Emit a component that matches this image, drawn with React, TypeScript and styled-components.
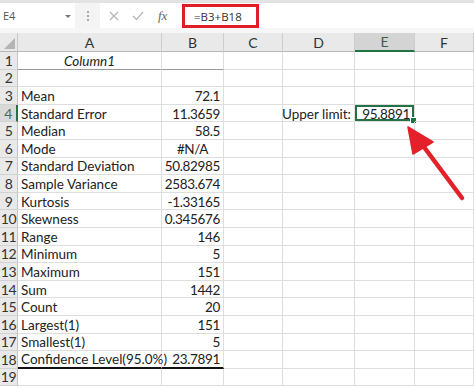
import React from 'react';
import styled, { createGlobalStyle, css } from 'styled-components';

const GlobalStyle = createGlobalStyle`
  html, body {
    margin: 0;
    padding: 0;
    background: #ffffff;
    overflow: hidden;
  }
  body {
    font-family: Lato, "Open Sans", sans-serif;
  }
`;

const Page = styled.div`
  position: relative;
  width: 474px;
  height: 389px;
  overflow: hidden;
  background: #fff;
`;

const TopStrip = styled.div`
  height: 3px;
  background: #e3e3e3;
`;

const FormulaBar = styled.div`
  height: 25px;
  display: flex;
  align-items: stretch;
  background: #f4f4f4;
`;

const NameBox = styled.div`
  width: 75px;
  background: #fff;
  display: flex;
  align-items: center;
  justify-content: space-between;
  padding: 0 4px 0 3px;
  box-sizing: border-box;
  font-family: "Open Sans", Lato, sans-serif;
  font-size: 11px;
  color: #555;
`;

const Caret = styled.span`
  width: 0;
  height: 0;
  border-left: 3px solid transparent;
  border-right: 3px solid transparent;
  border-top: 3px solid #777;
  margin-top: 1px;
`;

const Grip = styled.div`
  width: 25px;
  display: flex;
  flex-direction: column;
  align-items: center;
  justify-content: center;
  gap: 2px;
`;

const Dot = styled.span`
  width: 2px;
  height: 2px;
  background: #a8a8a8;
`;

const FxBox = styled.div`
  width: 82px;
  background: #fff;
  display: flex;
  align-items: center;
  gap: 13px;
  padding-left: 9px;
  box-sizing: border-box;
`;

const FxLabel = styled.span`
  font-family: "Liberation Serif", serif;
  font-style: italic;
  font-size: 13px;
  color: #666;
  margin-left: 1px;
`;

const FormulaInput = styled.div`
  flex: 1;
  background: #fff;
  display: flex;
  align-items: center;
`;

const Highlight = styled.div`
  width: 77px;
  height: 24px;
  margin-top: 1px;
  border: 3px solid #df1f26;
  box-sizing: border-box;
  display: flex;
  align-items: center;
  padding-left: 9px;
  font-family: "Open Sans", Lato, sans-serif;
  font-size: 11.5px;
  color: #333;
`;

const Gap = styled.div`
  height: 5px;
  background: #f6f6f6;
`;

const Sheet = styled.div`
  display: grid;
  grid-template-columns: 18px 144px 62px 59px 72px 60px 1fr;
  grid-template-rows: 19px;
  grid-auto-rows: 17.6px;
  font-size: 13.5px;
  color: #222;
`;

const Corner = styled.div`
  position: relative;
  background: #e9e9e9;
  border-right: 1px solid #c9c9c9;
  border-bottom: 1px solid #b8b8b8;
  &::after {
    content: '';
    position: absolute;
    right: 2px;
    bottom: 2px;
    width: 0;
    height: 0;
    border-left: 11px solid transparent;
    border-bottom: 11px solid #b4b4b4;
  }
`;

const ColHead = styled.div<{ $active?: boolean }>`
  background: ${p => (p.$active ? '#d4d4d4' : '#e9e9e9')};
  border-right: 1px solid #cdcdcd;
  border-bottom: ${p => (p.$active ? '2px solid #217346' : '1px solid #b8b8b8')};
  display: flex;
  align-items: center;
  justify-content: center;
  color: ${p => (p.$active ? '#3d5e48' : '#333')};
  font-size: 14px;
`;

const RowHead = styled.div<{ $active?: boolean }>`
  background: ${p => (p.$active ? '#d9d9d9' : '#e9e9e9')};
  border-right: ${p => (p.$active ? '2px solid #217346' : '1px solid #c4c4c4')};
  border-bottom: 1px solid #d2d2d2;
  display: flex;
  align-items: center;
  justify-content: center;
  color: ${p => (p.$active ? '#4f6b58' : '#333')};
  font-size: 14px;
  letter-spacing: -0.4px;
`;

type Align = 'left' | 'right' | 'center';

const Cell = styled.div<{
  $align?: Align;
  $italic?: boolean;
  $numeric?: boolean;
  $rule?: 'thin' | 'thick';
  $selected?: boolean;
}>`
  position: relative;
  border-right: 1px solid #dedede;
  border-bottom: 1px solid #dedede;
  display: flex;
  align-items: center;
  padding: 1px 3px 0;
  white-space: nowrap;
  overflow: visible;
  justify-content: ${p =>
    p.$align === 'right' ? 'flex-end' : p.$align === 'center' ? 'center' : 'flex-start'};
  font-style: ${p => (p.$italic ? 'italic' : 'normal')};
  letter-spacing: ${p => (p.$numeric ? '-0.35px' : 'normal')};
  ${p => p.$rule === 'thin' && css`border-bottom-color: #9a9a9a;`}
  ${p => p.$rule === 'thick' && css`border-bottom: 2px solid #111;`}
  ${p =>
    p.$selected &&
    css`
      padding-right: 4px;
      box-shadow: inset 0 0 0 2px #217346;
      &::after {
        content: '';
        position: absolute;
        right: -3px;
        bottom: -3px;
        width: 5px;
        height: 5px;
        background: #217346;
        border: 1px solid #fff;
      }
    `}
`;

const Arrow = styled.svg`
  position: absolute;
  left: 0;
  top: 0;
  pointer-events: none;
`;

const columns = ['A', 'B', 'C', 'D', 'E', 'F'];

type Row = { label?: string; value?: string; align?: Align };

const stats: Row[] = [
  {},
  {},
  { label: 'Mean', value: '72.1' },
  { label: 'Standard Error', value: '11.3659' },
  { label: 'Median', value: '58.5' },
  { label: 'Mode', value: '#N/A', align: 'center' },
  { label: 'Standard Deviation', value: '50.82985' },
  { label: 'Sample Variance', value: '2583.674' },
  { label: 'Kurtosis', value: '-1.33165' },
  { label: 'Skewness', value: '0.345676' },
  { label: 'Range', value: '146' },
  { label: 'Minimum', value: '5' },
  { label: 'Maximum', value: '151' },
  { label: 'Sum', value: '1442' },
  { label: 'Count', value: '20' },
  { label: 'Largest(1)', value: '151' },
  { label: 'Smallest(1)', value: '5' },
  { label: 'Confidence Level(95.0%)', value: '23.7891' },
  {},
];

export default function App() {
  return (
    <Page>
      <GlobalStyle />
      <TopStrip />
      <FormulaBar>
        <NameBox>
          E4
          <Caret />
        </NameBox>
        <Grip>
          <Dot />
          <Dot />
          <Dot />
        </Grip>
        <FxBox>
          <svg width="10" height="10" viewBox="0 0 10 10">
            <path d="M1 1 L9 9 M9 1 L1 9" stroke="#b5b5b5" strokeWidth="1.2" fill="none" />
          </svg>
          <svg width="12" height="10" viewBox="0 0 12 10">
            <path d="M1 5 L4.5 8.5 L11 1" stroke="#b5b5b5" strokeWidth="1.2" fill="none" />
          </svg>
          <FxLabel>fx</FxLabel>
        </FxBox>
        <FormulaInput>
          <Highlight>=B3+B18</Highlight>
        </FormulaInput>
      </FormulaBar>
      <Gap />
      <Sheet>
        <Corner />
        {columns.map(c => (
          <ColHead key={c} $active={c === 'E'}>
            {c}
          </ColHead>
        ))}
        {stats.map((row, i) => {
          const n = i + 1;
          const rule = n === 1 ? 'thin' : n === 18 ? 'thick' : undefined;
          return (
            <React.Fragment key={n}>
              <RowHead $active={n === 4}>{n}</RowHead>
              {n === 1 ? (
                <Cell $align="center" $italic $rule={rule}>
                  Column1
                </Cell>
              ) : (
                <Cell $rule={rule}>{row.label}</Cell>
              )}
              <Cell $align={row.align ?? 'right'} $numeric $rule={rule}>
                {row.value}
              </Cell>
              <Cell />
              <Cell $align="right">{n === 4 ? 'Upper limit:' : ''}</Cell>
              <Cell $align="right" $numeric $selected={n === 4}>
                {n === 4 ? '95.8891' : ''}
              </Cell>
              <Cell />
            </React.Fragment>
          );
        })}
      </Sheet>
      <Arrow width="474" height="389" viewBox="0 0 474 389">
        <line x1="462" y1="198" x2="421" y2="143" stroke="#e3212b" strokeWidth="4.5" strokeLinecap="round" />
        <polygon points="408,127 433,142 413,154" fill="#e3212b" stroke="#e3212b" strokeWidth="1.5" strokeLinejoin="round" />
      </Arrow>
    </Page>
  );
}
